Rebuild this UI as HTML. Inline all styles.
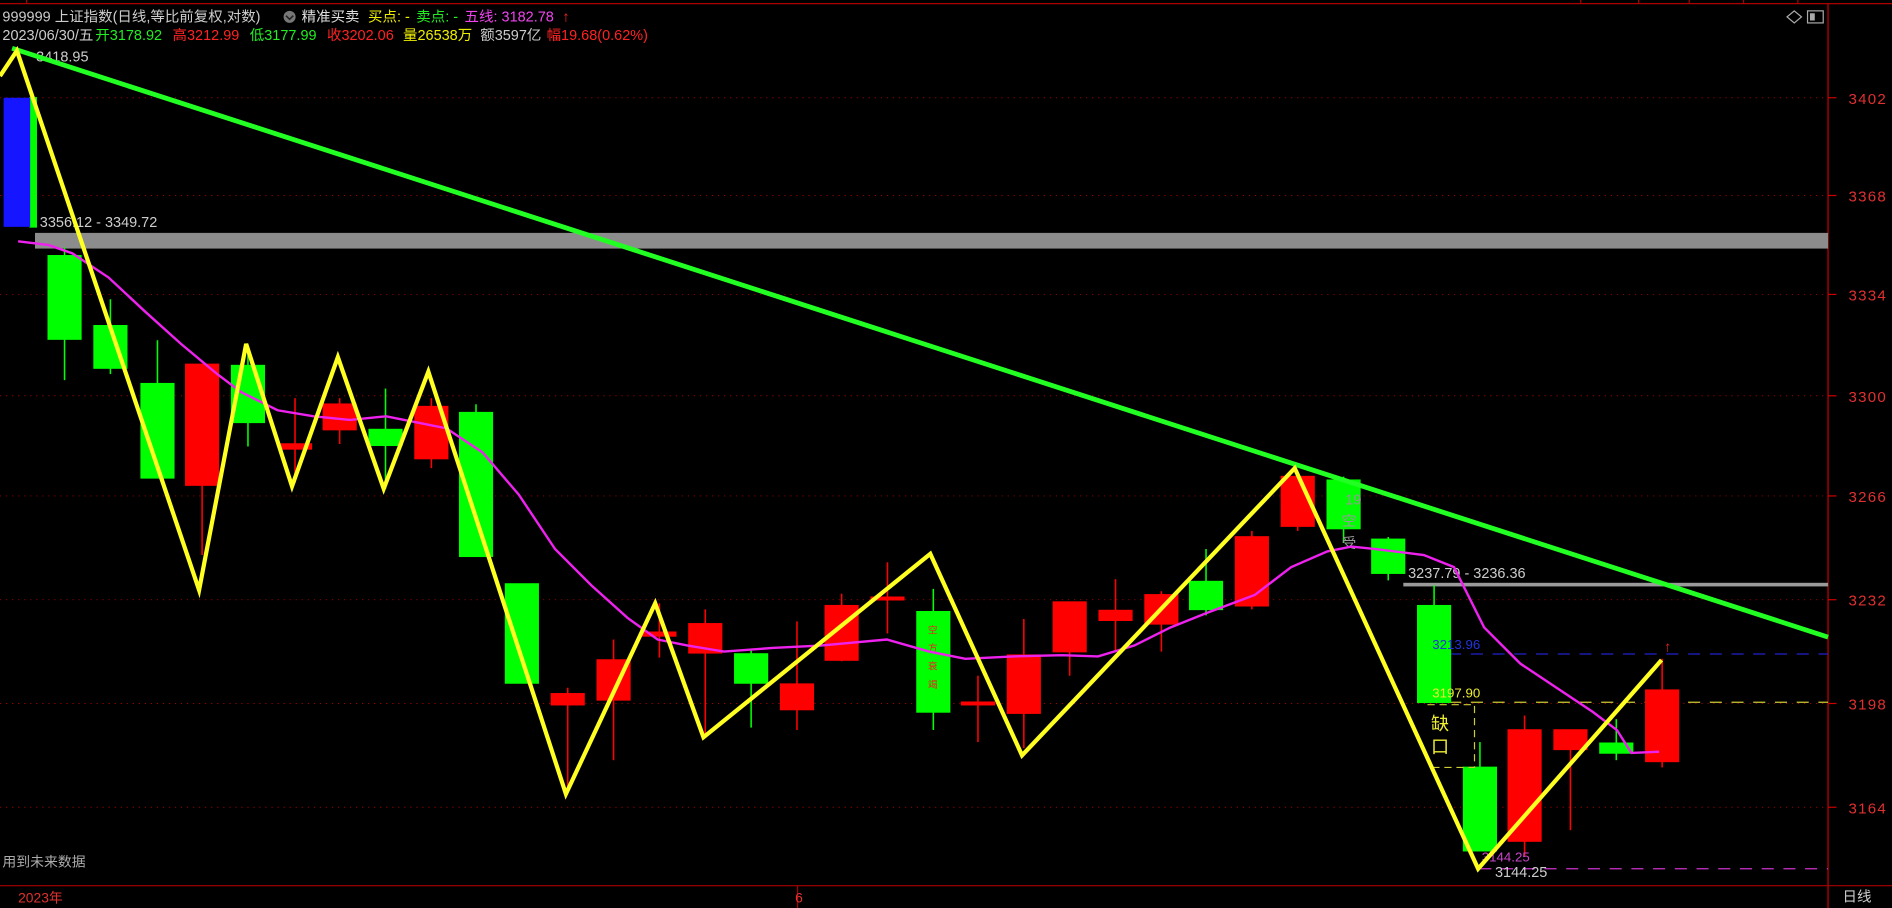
<!DOCTYPE html>
<html><head><meta charset="utf-8"><style>
html,body{margin:0;padding:0;background:#000;overflow:hidden}
svg{display:block}
text{font-family:"Liberation Sans","Noto Sans CJK SC",sans-serif}
</style></head><body>
<svg width="1892" height="908" viewBox="0 0 1568 752.5" preserveAspectRatio="none">
<rect width="1568" height="753" fill="#000"/>
<line x1="0" y1="3" x2="1568" y2="3" stroke="#a00" stroke-width="1"/>
<line x1="1515" y1="3" x2="1515" y2="753" stroke="#a00" stroke-width="1.2"/>
<line x1="0" y1="734" x2="1568" y2="734" stroke="#a00" stroke-width="1"/>
<line x1="661" y1="734" x2="661" y2="753" stroke="#a00"/>
<g stroke="#a00"><line x1="1310" y1="0" x2="1310" y2="3"/><line x1="1358" y1="0" x2="1358" y2="3"/><line x1="1400" y1="0" x2="1400" y2="3"/><line x1="1445" y1="0" x2="1445" y2="3"/><line x1="1490" y1="0" x2="1490" y2="3"/><line x1="22" y1="0" x2="22" y2="3"/></g>
<g stroke="#900" stroke-dasharray="1,4" stroke-width="0.8">
<line x1="0" y1="81" x2="1515" y2="81"/><line x1="0" y1="162" x2="1515" y2="162"/><line x1="0" y1="244" x2="1515" y2="244"/><line x1="0" y1="328" x2="1515" y2="328"/><line x1="0" y1="411" x2="1515" y2="411"/><line x1="0" y1="497" x2="1515" y2="497"/><line x1="0" y1="583" x2="1515" y2="583"/><line x1="0" y1="669" x2="1515" y2="669"/>
</g>
<g stroke="#c00"><line x1="1515" y1="81" x2="1522" y2="81"/><line x1="1515" y1="162" x2="1522" y2="162"/><line x1="1515" y1="244" x2="1522" y2="244"/><line x1="1515" y1="328" x2="1522" y2="328"/><line x1="1515" y1="411" x2="1522" y2="411"/><line x1="1515" y1="497" x2="1522" y2="497"/><line x1="1515" y1="583" x2="1522" y2="583"/><line x1="1515" y1="669" x2="1522" y2="669"/></g>
<g fill="#e03030" font-size="12.5" letter-spacing="1"><text x="1532" y="86">3402</text><text x="1532" y="167">3368</text><text x="1532" y="249">3334</text><text x="1532" y="333">3300</text><text x="1532" y="416">3266</text><text x="1532" y="502">3232</text><text x="1532" y="588">3198</text><text x="1532" y="674">3164</text></g>
<text x="1527" y="747" fill="#ccc" font-size="12">日线</text>
<text x="15" y="748" fill="#e03030" font-size="11.5">2023年</text>
<text x="659" y="748" fill="#e03030" font-size="11.5">6</text>
<g font-size="12">
<text x="2" y="18" fill="#ccc">999999 上证指数(日线,等比前复权,对数)</text>
<circle cx="240" cy="14" r="5" fill="#777"/><path d="M237 13l3 3 3-3" stroke="#222" fill="none" stroke-width="1.3"/>
<text x="250" y="18" fill="#ddd">精准买卖</text>
<text x="305" y="18" fill="#ee0">买点: -</text>
<text x="345" y="18" fill="#2e2">卖点: -</text>
<text x="385" y="18" fill="#e4e">五线: 3182.78</text>
<text x="466" y="18" fill="#f22">↑</text>
<text x="2" y="33" fill="#ccc">2023/06/30/五</text>
<text x="79" y="33" fill="#2e2">开3178.92</text>
<text x="143" y="33" fill="#f22">高3212.99</text>
<text x="207" y="33" fill="#2e2">低3177.99</text>
<text x="271" y="33" fill="#f22">收3202.06</text>
<text x="334" y="33" fill="#ee0">量26538万</text>
<text x="398" y="33" fill="#ccc">额3597亿</text>
<text x="453" y="33" fill="#f22">幅19.68(0.62%)</text>
</g>
<path d="M1481 14l6-5 6 5-6 5z" stroke="#aaa" fill="none"/>
<rect x="1498" y="9" width="13" height="10" stroke="#aaa" fill="none"/><rect x="1500" y="11" width="4" height="6" fill="#aaa"/>
<rect x="29" y="193" width="1486" height="13" fill="#8c8c8c"/>
<rect x="1163" y="483" width="352" height="3" fill="#9a9a9a"/>
<line x1="1183" y1="542" x2="1515" y2="542" stroke="#2222cc" stroke-dasharray="10,8"/>
<line x1="1183" y1="582" x2="1515" y2="582" stroke="#cc3" stroke-dasharray="10,8"/>
<line x1="1226" y1="720" x2="1515" y2="720" stroke="#c3c" stroke-dasharray="10,8"/>
<g stroke-width="1.3">
<g stroke="#00ff00" fill="#00ff00">
<line x1="53.5" y1="205" x2="53.5" y2="315"/><rect x="40" y="212" width="27" height="69"/>
<line x1="91.5" y1="248" x2="91.5" y2="310"/><rect x="78" y="270" width="27" height="35"/>
<line x1="130.5" y1="282" x2="130.5" y2="396"/><rect x="117" y="318" width="27" height="78"/>
<line x1="205.5" y1="290" x2="205.5" y2="370"/><rect x="192" y="303" width="27" height="47"/>
<line x1="319.5" y1="322" x2="319.5" y2="405"/><rect x="306" y="356" width="27" height="13"/>
<line x1="394.5" y1="335" x2="394.5" y2="461"/><rect x="381" y="342" width="27" height="119"/>
<rect x="419" y="484" width="27" height="82"/>
<line x1="622.5" y1="538" x2="622.5" y2="603"/><rect x="609" y="542" width="27" height="24"/>
<line x1="773.5" y1="488" x2="773.5" y2="605"/><rect x="760" y="507" width="27" height="83"/>
<line x1="999.5" y1="455" x2="999.5" y2="510"/><rect x="986" y="482" width="27" height="23"/>
<line x1="1113.5" y1="395" x2="1113.5" y2="450"/><rect x="1100" y="398" width="27" height="40"/>
<line x1="1150.5" y1="445" x2="1150.5" y2="481"/><rect x="1137" y="447" width="27" height="28"/>
<line x1="1188.5" y1="485" x2="1188.5" y2="582"/><rect x="1175" y="502" width="27" height="80"/>
<line x1="1226.5" y1="615" x2="1226.5" y2="705"/><rect x="1213" y="636" width="27" height="69"/>
<line x1="1339.5" y1="596" x2="1339.5" y2="630"/><rect x="1326" y="616" width="27" height="8"/>
<rect x="25" y="81" width="5" height="107"/>
</g>
<rect x="3" y="81" width="22" height="107" fill="#1515ff"/>
<g stroke="#ff0000" fill="#ff0000">
<line x1="167.5" y1="302" x2="167.5" y2="460"/><rect x="154" y="302" width="27" height="100"/>
<line x1="244.5" y1="330" x2="244.5" y2="400"/><rect x="231" y="368" width="27" height="4"/>
<line x1="281.5" y1="330" x2="281.5" y2="368"/><rect x="268" y="335" width="27" height="21"/>
<line x1="357.5" y1="330" x2="357.5" y2="388"/><rect x="344" y="337" width="27" height="43"/>
<line x1="470.5" y1="570" x2="470.5" y2="656"/><rect x="457" y="575" width="27" height="9"/>
<line x1="508.5" y1="530" x2="508.5" y2="630"/><rect x="495" y="547" width="27" height="33"/>
<line x1="546.5" y1="500" x2="546.5" y2="545"/><rect x="533" y="524" width="27" height="3"/>
<line x1="584.5" y1="505" x2="584.5" y2="610"/><rect x="571" y="517" width="27" height="24"/>
<line x1="660.5" y1="515" x2="660.5" y2="605"/><rect x="647" y="567" width="27" height="21"/>
<line x1="697.5" y1="492" x2="697.5" y2="548"/><rect x="684" y="502" width="27" height="45"/>
<line x1="735.5" y1="466" x2="735.5" y2="525"/><rect x="722" y="495" width="27" height="2"/>
<line x1="810.5" y1="560" x2="810.5" y2="615"/><rect x="797" y="582" width="27" height="2"/>
<line x1="848.5" y1="513" x2="848.5" y2="620"/><rect x="835" y="543" width="27" height="48"/>
<line x1="886.5" y1="499" x2="886.5" y2="560"/><rect x="873" y="499" width="27" height="41"/>
<line x1="924.5" y1="480" x2="924.5" y2="540"/><rect x="911" y="506" width="27" height="8"/>
<line x1="962.5" y1="490" x2="962.5" y2="540"/><rect x="949" y="493" width="27" height="24"/>
<line x1="1037.5" y1="440" x2="1037.5" y2="505"/><rect x="1024" y="445" width="27" height="57"/>
<line x1="1075.5" y1="390" x2="1075.5" y2="440"/><rect x="1062" y="395" width="27" height="41"/>
<line x1="1263.5" y1="593" x2="1263.5" y2="710"/><rect x="1250" y="605" width="27" height="92"/>
<line x1="1301.5" y1="605" x2="1301.5" y2="688"/><rect x="1288" y="605" width="27" height="16"/>
<line x1="1377.5" y1="546" x2="1377.5" y2="636"/><rect x="1364" y="572" width="27" height="59"/>
</g>
</g>
<!-- overlay labels -->
<text x="33" y="188" fill="#ccc" font-size="12">3356.12 - 3349.72</text>
<text x="1167" y="479" fill="#ccc" font-size="12">3237.79 - 3236.36</text>
<text x="1187" y="538" fill="#2233dd" font-size="11">3213.96</text>
<text x="1187" y="578" fill="#ee3" font-size="11">3197.90</text>
<path d="M1183 584H1222V636H1183" stroke="#cc3" fill="none" stroke-dasharray="6,4"/>
<text x="1186" y="605" fill="#ee3" font-size="15">缺</text><text x="1186" y="624" fill="#ee3" font-size="15">口</text>
<text x="1239" y="727" fill="#ccc" font-size="12">3144.25</text>
<text x="1228" y="714" fill="#c4c" font-size="11">3144.25</text>
<text x="30" y="51" fill="#ccc" font-size="12">3418.95</text>
<text x="2" y="718" fill="#aaa" font-size="11.5">用到未来数据</text>
<text x="1379" y="540" fill="#d22" font-size="12">↑</text>
<g fill="#e22" font-size="8"><text x="769" y="525">空</text><text x="769" y="540">方</text><text x="769" y="555">衰</text><text x="769" y="570">竭</text></g>
<g fill="#999" font-size="12"><text x="1115" y="418">19</text><text x="1112" y="436">空</text><text x="1112" y="454">受</text></g>
<polyline fill="none" stroke="#ee22ee" stroke-width="2" points="15,200 40,203 60,210 90,230 120,258 150,285 180,310 200,325 230,340 260,345 290,348 320,345 345,350 370,355 400,375 430,410 460,455 490,485 520,512 545,530 570,535 600,540 640,537 680,535 735,530 770,540 800,546 840,544 880,543 910,544 940,535 970,520 1000,508 1040,493 1070,470 1100,457 1120,453 1140,455 1180,460 1205,470 1230,520 1260,550 1290,570 1320,590 1340,605 1352,624 1375,623"/>
<line x1="10" y1="40" x2="1515" y2="528" stroke="#22ff22" stroke-width="4"/>
<polyline fill="none" stroke="#ffff22" stroke-width="3.5" stroke-linejoin="miter" points="0,63 14,42 165,489 204,285 242,403 280,296 318,405 355,308 469,658 543,500 583,611 771,459 847,626 1073,388 1225,720 1377,547"/>
</svg>
</body></html>
